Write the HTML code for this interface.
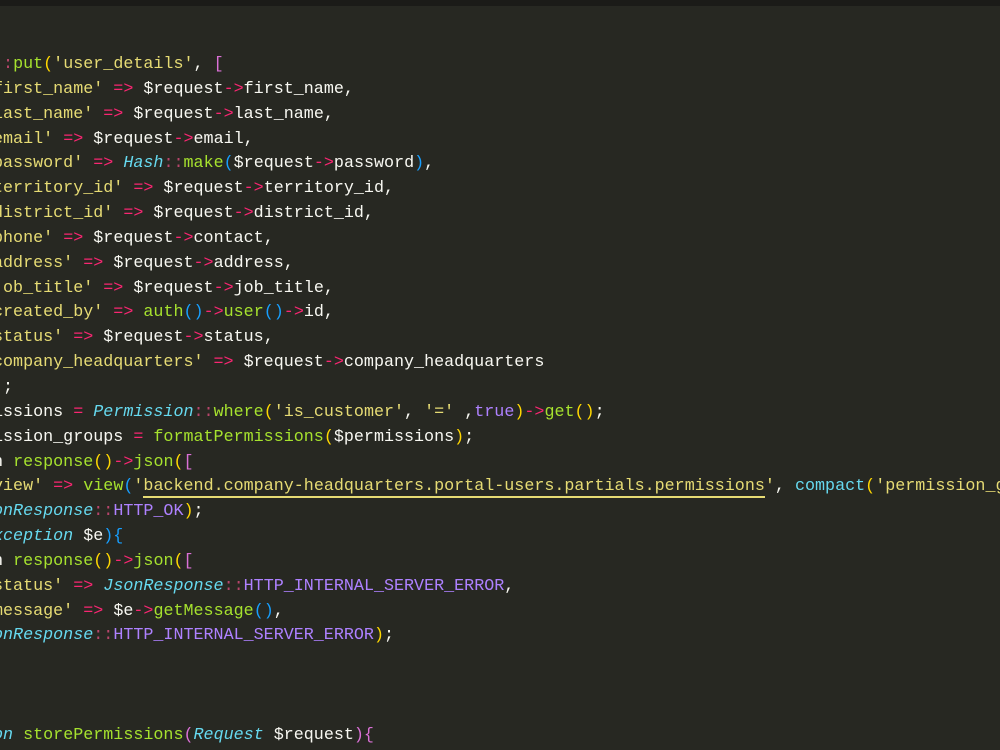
<!DOCTYPE html>
<html><head><meta charset="utf-8"><style>
html,body{margin:0;padding:0;width:1000px;height:750px;overflow:hidden;background:#272822;}
.top{position:absolute;left:0;top:0;width:1000px;height:6px;background:#1b1b18;}
pre{position:absolute;left:-7px;top:53px;margin:0;font-family:"Liberation Mono",monospace;font-size:16.72px;line-height:24.85px;color:#f8f8f2;white-space:pre;}
.s{color:#e6db74}.o{color:#f92672}.f{color:#a6e22e}.c{color:#66d9ef;font-style:italic}.cn{color:#66d9ef}
.k{color:#ae81ff}.y{color:#ffd700}.m{color:#da70d6}.b{color:#179fff}.d{color:#b8456b}
.u{border-bottom:2px solid #e6db74}
</style></head><body><div class="top"></div>
<pre><span class="d">::</span><span class="f">put</span><span class="y">(</span><span class="s">'user_details'</span>, <span class="m">[</span>
<span class="s">first_name'</span> <span class="o">=&gt;</span> $request<span class="o">-&gt;</span>first_name,
<span class="s">last_name'</span> <span class="o">=&gt;</span> $request<span class="o">-&gt;</span>last_name,
<span class="s">email'</span> <span class="o">=&gt;</span> $request<span class="o">-&gt;</span>email,
<span class="s">password'</span> <span class="o">=&gt;</span> <span class="c">Hash</span><span class="d">::</span><span class="f">make</span><span class="b">(</span>$request<span class="o">-&gt;</span>password<span class="b">)</span>,
<span class="s">territory_id'</span> <span class="o">=&gt;</span> $request<span class="o">-&gt;</span>territory_id,
<span class="s">district_id'</span> <span class="o">=&gt;</span> $request<span class="o">-&gt;</span>district_id,
<span class="s">phone'</span> <span class="o">=&gt;</span> $request<span class="o">-&gt;</span>contact,
<span class="s">address'</span> <span class="o">=&gt;</span> $request<span class="o">-&gt;</span>address,
<span class="s">job_title'</span> <span class="o">=&gt;</span> $request<span class="o">-&gt;</span>job_title,
<span class="s">created_by'</span> <span class="o">=&gt;</span> <span class="f">auth</span><span class="b">()</span><span class="o">-&gt;</span><span class="f">user</span><span class="b">()</span><span class="o">-&gt;</span>id,
<span class="s">status'</span> <span class="o">=&gt;</span> $request<span class="o">-&gt;</span>status,
<span class="s">company_headquarters'</span> <span class="o">=&gt;</span> $request<span class="o">-&gt;</span>company_headquarters
<span class="m">]</span>;
issions <span class="o">=</span> <span class="c">Permission</span><span class="d">::</span><span class="f">where</span><span class="y">(</span><span class="s">'is_customer'</span>, <span class="s">'='</span> ,<span class="k">true</span><span class="y">)</span><span class="o">-&gt;</span><span class="f">get</span><span class="y">()</span>;
ission_groups <span class="o">=</span> <span class="f">formatPermissions</span><span class="y">(</span>$permissions<span class="y">)</span>;
n <span class="f">response</span><span class="y">()</span><span class="o">-&gt;</span><span class="f">json</span><span class="y">(</span><span class="m">[</span>
<span class="s">view'</span> <span class="o">=&gt;</span> <span class="f">view</span><span class="b">(</span><span class="s">'<span class="u">backend.company-headquarters.portal-users.partials.permissions</span>'</span>, <span class="cn">compact</span><span class="y">(</span><span class="s">'permission_groups'</span>
<span class="c">onResponse</span><span class="d">::</span><span class="k">HTTP_OK</span><span class="y">)</span>;
<span class="c">xception</span> $e<span class="b">){</span>
n <span class="f">response</span><span class="y">()</span><span class="o">-&gt;</span><span class="f">json</span><span class="y">(</span><span class="m">[</span>
<span class="s">status'</span> <span class="o">=&gt;</span> <span class="c">JsonResponse</span><span class="d">::</span><span class="k">HTTP_INTERNAL_SERVER_ERROR</span>,
<span class="s">message'</span> <span class="o">=&gt;</span> $e<span class="o">-&gt;</span><span class="f">getMessage</span><span class="b">()</span>,
<span class="c">onResponse</span><span class="d">::</span><span class="k">HTTP_INTERNAL_SERVER_ERROR</span><span class="y">)</span>;



<span class="c">on</span> <span class="f">storePermissions</span><span class="m">(</span><span class="c">Request</span> $request<span class="m">){</span></pre>
</body></html>
